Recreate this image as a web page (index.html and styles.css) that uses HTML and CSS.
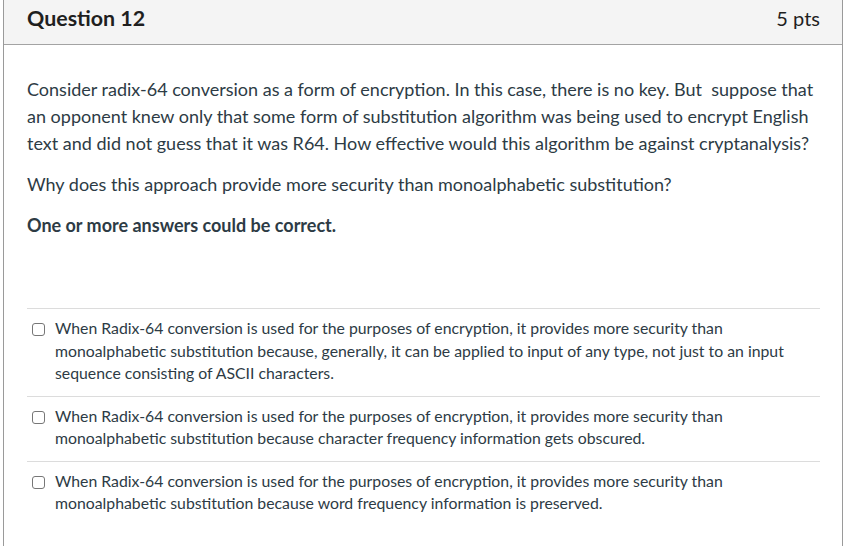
FILE: index.html
```html
<!DOCTYPE html>
<html>
<head>
<meta charset="utf-8">
<link rel="stylesheet" href="styles.css">
</head>
<body>
<div class="question">
  <div class="header">
    <div class="title">Question 12</div>
    <div class="pts">5 pts</div>
  </div>
  <div class="content">
    <p class="para">Consider radix-64 conversion as a form of encryption. In this case, there is no key. But&nbsp; suppose that an opponent knew only that some form of substitution algorithm was being used to encrypt English text and did not guess that it was R64. How effective would this algorithm be against cryptanalysis?</p>
    <p class="para">Why does this approach provide more security than monoalphabetic substitution?</p>
    <p class="para strong">One or more answers could be correct.</p>
    <div class="answers">
      <div class="answer">
        <span class="box"></span>
        <span class="label">When Radix-64 conversion is used for the purposes of encryption, it provides more security than monoalphabetic substitution because, generally, it can be applied to input of any type, not just to an input sequence consisting of ASCII characters.</span>
      </div>
      <div class="answer">
        <span class="box"></span>
        <span class="label">When Radix-64 conversion is used for the purposes of encryption, it provides more security than monoalphabetic substitution because character frequency information gets obscured.</span>
      </div>
      <div class="answer">
        <span class="box"></span>
        <span class="label">When Radix-64 conversion is used for the purposes of encryption, it provides more security than monoalphabetic substitution because word frequency information is preserved.</span>
      </div>
    </div>
  </div>
</div>
</body>
</html>
```
FILE: styles.css
```css
html, body {
  margin: 0;
  padding: 0;
  background: #ffffff;
}
body {
  font-family: Lato, "Open Sans", sans-serif;
  color: #2d3b45;
}
.question {
  margin-left: 3px;
  width: 838px;
  height: 546px;
  border-left: 1px solid #9a9a9a;
  border-right: 1px solid #9a9a9a;
}
.header {
  height: 44px;
  background: #f4f4f4;
  border-bottom: 1px solid #a3a3a3;
  display: flex;
  justify-content: space-between;
  align-items: center;
  padding: 0 22px 0 23px;
}
.title {
  font-size: 21.4px;
  font-weight: 700;
  color: #1f1f1f;
  margin-top: -8px;
}
.pts {
  font-size: 20px;
  color: #1f1f1f;
  margin-top: -8px;
}
.content {
  padding: 31px 22px 0 23px;
}
.para {
  margin: 0 0 14px;
  font-size: 18px;
  line-height: 27px;
}
.strong {
  font-weight: 700;
}
.answers {
  margin-top: 69px;
}
.answer {
  display: flex;
  align-items: flex-start;
  gap: 10px;
  padding: 8px 0 11px 5px;
  border-top: 1px solid #dcdcdc;
  font-size: 15.8px;
  line-height: 22.5px;
}
.box {
  flex: none;
  width: 11px;
  height: 11px;
  border: 1px solid #777777;
  border-radius: 3px;
  margin-top: 6px;
}
.label {
  flex: 1;
  padding-right: 20px;
}
```
